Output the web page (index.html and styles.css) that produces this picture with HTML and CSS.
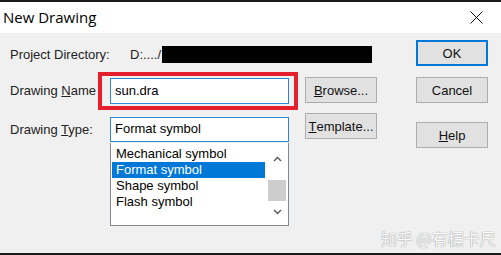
FILE: index.html
```html
<!DOCTYPE html>
<html>
<head>
<meta charset="utf-8">
<link rel="stylesheet" href="styles.css">
</head>
<body>
<div class="dialog">
  <div class="topline"></div>
  <div class="titlebar">
    <span class="title">New Drawing</span>
    <svg class="close" width="13" height="13" viewBox="0 0 13 13"><path d="M0.5 0.5 L12.5 12.5 M12.5 0.5 L0.5 12.5" stroke="#111" stroke-width="1" fill="none"/></svg>
  </div>
  <div class="content">
    <div class="form">
      <div class="row row1">
        <span class="lbl1">Project Directory:</span>
        <span class="dirval">D:..../</span>
        <span class="redact"></span>
      </div>
      <div class="row row2">
        <span class="lbl2">Drawing <u>N</u>ame</span>
        <div class="highlight">
          <div class="input">sun.dra</div>
        </div>
        <div class="btn btn-side"><u>B</u>rowse...</div>
      </div>
      <div class="row row3">
        <span class="lbl3">Drawing <u>T</u>ype:</span>
        <div class="combo">Format symbol</div>
        <div class="btn btn-side btn-tpl"><u>T</u>emplate...</div>
      </div>
    </div>
    <div class="buttons">
      <div class="btn btn-ok">OK</div>
      <div class="btn btn-cancel">Cancel</div>
      <div class="btn btn-help"><u>H</u>elp</div>
    </div>
    <div class="listbox">
      <div class="items">
        <div class="item">Mechanical symbol</div>
        <div class="item sel">Format symbol</div>
        <div class="item">Shape symbol</div>
        <div class="item">Flash symbol</div>
      </div>
      <div class="scrollbar">
        <svg class="arrow" width="9" height="6" viewBox="0 0 9 6"><path d="M1 5 L4.5 1.5 L8 5" stroke="#555" stroke-width="1.4" fill="none"/></svg>
        <div class="thumb"></div>
        <svg class="arrow" width="9" height="6" viewBox="0 0 9 6"><path d="M1 1 L4.5 4.5 L8 1" stroke="#555" stroke-width="1.4" fill="none"/></svg>
      </div>
    </div>
    <div class="watermark">知乎 @有標卡尺</div>
  </div>
  <div class="bottomline"></div>
</div>
</body>
</html>
```
FILE: styles.css
```css
* { box-sizing: border-box; }
html, body { margin: 0; padding: 0; }
body {
  width: 501px;
  height: 255px;
  overflow: hidden;
  background: #f0f0f0;
  font-family: "Liberation Sans", Arial, sans-serif;
  font-size: 13px;
  color: #000;
}
.dialog {
  width: 501px;
  height: 255px;
  display: flex;
  flex-direction: column;
}
.topline { height: 2px; background: #1a1a1a; }
.titlebar {
  height: 31px;
  background: #fff;
  display: flex;
  align-items: center;
  justify-content: space-between;
  padding: 0 18px 0 3px;
}
.title {
  font-family: "Open Sans", "Liberation Sans", sans-serif;
  font-size: 15px;
  color: #000;
  margin-top: -1px;
}
.content {
  position: relative;
  flex: 1;
  display: flex;
  background: #f0f0f0;
}
.form {
  flex: 1;
  padding-left: 10px;
}
.row { display: flex; }
.row1 {
  margin-top: 12px;
  height: 18px;
  align-items: center;
}
.lbl1 { width: 120px; color: #222; }
.dirval { color: #222; margin-right: 1px; }
.redact {
  width: 210px;
  height: 17px;
  background: #000;
}
.row2 {
  margin-top: 9px;
  align-items: flex-start;
}
.lbl2 { width: 88px; margin-top: 11px; color: #222; }
.highlight {
  width: 200px;
  height: 38px;
  border: 4px solid #e3202b;
  padding: 2px 5px 0 8px;
}
.input {
  width: 179px;
  height: 26px;
  background: #fff;
  border: 1px solid #2f86d4;
  padding: 4px 0 0 4px;
}
.btn {
  background: #e1e1e1;
  border: 1px solid #adadad;
  height: 26px;
  width: 72px;
  display: flex;
  align-items: center;
  justify-content: center;
  color: #111;
}
.btn-side { margin-left: 7px; margin-top: 5px; }
.row3 { margin-top: 3px; align-items: flex-start; }
.lbl3 { width: 100px; margin-top: 9px; color: #222; }
.combo {
  width: 179px;
  height: 25px;
  margin-top: 4px;
  background: #fff;
  border: 1px solid #2f86d4;
  padding: 3px 0 0 4px;
}
.btn-tpl { margin-left: 16px; margin-top: 0; }
.buttons {
  width: 72px;
  margin-right: 13px;
  padding-top: 7px;
  display: flex;
  flex-direction: column;
}
.btn-ok { border: 2px solid #0078d7; }
.btn-cancel { margin-top: 11px; }
.btn-help { margin-top: 19px; }
.listbox {
  position: absolute;
  left: 110px;
  top: 110px;
  width: 179px;
  height: 83px;
  background: #fff;
  border: 1px solid #828790;
  border-top: none;
  display: flex;
  padding: 1px;
}
.items { flex: 1; padding-right: 2px; padding-top: 2px; }
.item {
  height: 16px;
  line-height: 16px;
  padding-left: 4px;
  color: #000;
}
.item.sel { background: #0078d7; color: #fff; }
.scrollbar {
  width: 20px;
  display: flex;
  flex-direction: column;
  align-items: center;
  padding-top: 12px;
}
.thumb {
  width: 18px;
  height: 21px;
  background: #cdcdcd;
  margin-top: 18px;
  margin-bottom: 8px;
}
.watermark {
  position: absolute;
  left: 381px;
  top: 193px;
  font-family: "Noto Sans CJK SC", sans-serif;
  font-size: 16px;
  color: #fafafa;
  text-shadow: 0 0 1px #9a9a9a, 0 0 1px #9a9a9a;
}
.bottomline { height: 2px; background: #1a1a1a; }
```
